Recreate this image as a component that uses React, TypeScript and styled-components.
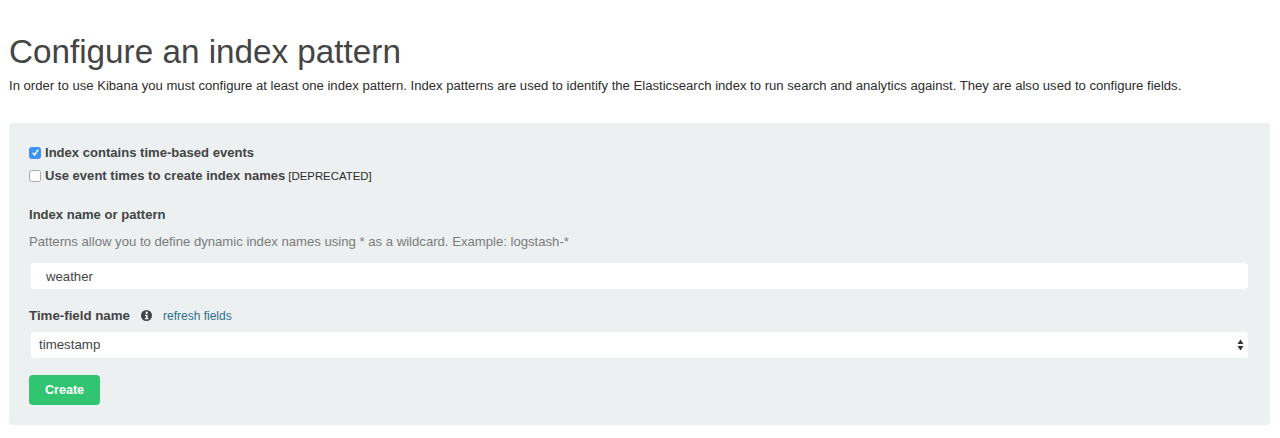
import React from "react";
import styled, { createGlobalStyle } from "styled-components";

const Global = createGlobalStyle`
  html, body { margin: 0; padding: 0; background: #fff; }
  body { font-family: "Liberation Sans", Arial, sans-serif; color: #444; font-size: 13px; }
`;
const Page = styled.div`
  padding: 33px 10px 13px 9px;
  width: 1280px;
  height: 438px;
  box-sizing: border-box;
`;
const Title = styled.h1`
  margin: 0;
  font-size: 33.25px;
  line-height: 37px;
  font-weight: 400;
  color: #444;
`;
const Intro = styled.p`
  margin: 7px 0 0;
  font-size: 13.11px;
  line-height: 18px;
  color: #2d2d2d;
`;
const Panel = styled.form`
  margin-top: 28px;
  height: 302px;
  box-sizing: border-box;
  padding: 18px 20px 0;
  background: #ecf0f1;
  border-radius: 4px;
`;
const CheckRow = styled.label`
  display: flex;
  align-items: center;
  height: 23px;
  font-size: 13.07px;
  font-weight: 700;
  color: #444;
`;
const Box = styled.span<{ $checked?: boolean }>`
  width: 12px;
  height: 12px;
  box-sizing: border-box;
  margin-right: 4px;
  border-radius: 2.5px;
  display: flex;
  align-items: center;
  justify-content: center;
  background: ${(p) => (p.$checked ? "#3b93f7" : "#fff")};
  border: 1px solid ${(p) => (p.$checked ? "#3b93f7" : "#a9a9a9")};
`;
const Deprecated = styled.small`
  margin-left: 3px;
  font-size: 11.4px;
  font-weight: 400;
  color: #2d2d2d;
`;
const FieldLabel = styled.div`
  margin-top: 19px;
  font-size: 13.07px;
  line-height: 18px;
  font-weight: 700;
  color: #444;
`;
const Help = styled.div`
  margin-top: 9px;
  font-size: 13.13px;
  line-height: 18px;
  color: #7b7b7b;
`;
const TextInput = styled.input`
  display: block;
  width: 1217px;
  height: 26px;
  margin: 12px 0 0 2px;
  padding: 0 15px;
  box-sizing: border-box;
  border: none;
  outline: none;
  border-radius: 3px;
  background: #fff;
  font: 13.2px "Liberation Sans", Arial, sans-serif;
  color: #444;
`;
const TimeRow = styled.div`
  display: flex;
  align-items: center;
  margin-top: 17px;
  height: 18px;
`;
const TimeLabel = styled.span`
  font-size: 13.3px;
  font-weight: 700;
  color: #444;
`;
const InfoIcon = styled.svg`
  width: 11px;
  height: 11px;
  margin: 0 11px 0 11px;
`;
const Refresh = styled.a`
  padding-top: 2px;
  font-size: 12px;
  color: #2f6f8c;
  text-decoration: none;
`;
const SelectWrap = styled.div`
  position: relative;
  width: 1217px;
  margin: 8px 0 0 2px;
`;
const Select = styled.select`
  display: block;
  width: 100%;
  height: 26px;
  padding: 0 8px 2px;
  box-sizing: border-box;
  border: none;
  outline: none;
  border-radius: 3px;
  background: #fff;
  appearance: none;
  font: 13.3px "Liberation Sans", Arial, sans-serif;
  color: #444;
`;
const Arrows = styled.svg`
  position: absolute;
  right: 4px;
  top: 7px;
  width: 7px;
  height: 12px;
  pointer-events: none;
`;
const Create = styled.button`
  display: block;
  margin-top: 17px;
  width: 71px;
  height: 30px;
  border: none;
  border-radius: 4px;
  background: #31c471;
  color: #fff;
  font: 700 12.6px "Liberation Sans", Arial, sans-serif;
  padding: 0;
`;

export default function App() {
  return (
    <Page>
      <Global />
      <Title>Configure an index pattern</Title>
      <Intro>
        In order to use Kibana you must configure at least one index pattern. Index patterns are used to identify the Elasticsearch index to run search and analytics against. They are also used to configure fields.
      </Intro>
      <Panel>
        <CheckRow>
          <Box $checked>
            <svg width="9" height="9" viewBox="0 0 8 8" fill="none">
              <path d="M1.6 4.3 L3.2 6.2 L6.4 1.4" stroke="#fff" strokeWidth="1.3" />
            </svg>
          </Box>
          Index contains time-based events
        </CheckRow>
        <CheckRow>
          <Box />
          Use event times to create index names
          <Deprecated>[DEPRECATED]</Deprecated>
        </CheckRow>
        <FieldLabel>Index name or pattern</FieldLabel>
        <Help>Patterns allow you to define dynamic index names using * as a wildcard. Example: logstash-*</Help>
        <TextInput readOnly value="weather" />
        <TimeRow>
          <TimeLabel>Time-field name</TimeLabel>
          <InfoIcon viewBox="0 0 24 24">
            <circle cx="12" cy="12" r="12" fill="#444" />
            <circle cx="12.5" cy="6" r="2.6" fill="#ecf0f1" />
            <path d="M8.5 10.5 H14.5 V17.5 H16.5 V20 H8.5 V17.5 H10.5 V13 H8.5 Z" fill="#ecf0f1" />
          </InfoIcon>
          <Refresh href="#">refresh fields</Refresh>
        </TimeRow>
        <SelectWrap>
          <Select defaultValue="timestamp">
            <option value="timestamp">timestamp</option>
          </Select>
          <Arrows viewBox="0 0 7 12">
            <path d="M3.5 0.5 L6.5 5 H0.5 Z M0.5 7 H6.5 L3.5 11.5 Z" fill="#333" />
          </Arrows>
        </SelectWrap>
        <Create type="button">Create</Create>
      </Panel>
    </Page>
  );
}
